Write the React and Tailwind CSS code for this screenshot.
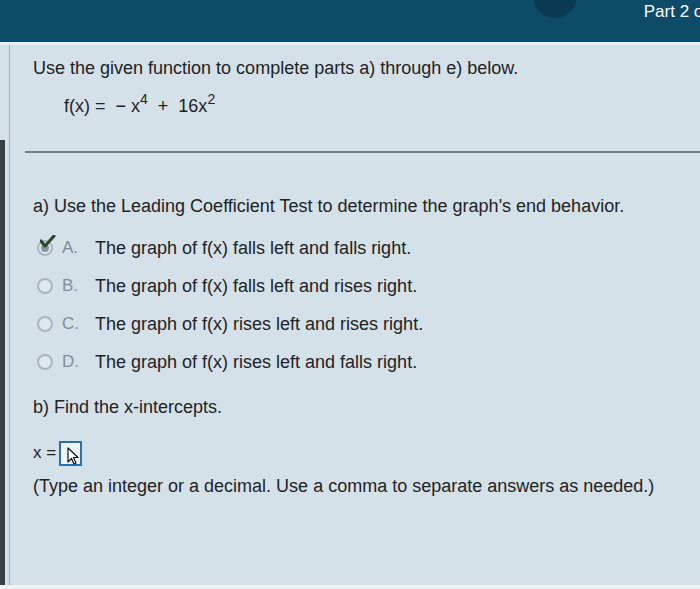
import React from "react";

const font = { fontFamily: '"Liberation Sans", Arial, sans-serif' };

function Radio({ checked }) {
  return (
    <span className="relative inline-block w-[16px] h-[16px]">
      <span className="absolute inset-0 rounded-full border-[2px] border-[#a9b6be] bg-[#dfe8ed]" />
      {checked && (
        <>
          <span className="absolute left-[4px] top-[4px] w-[8px] h-[8px] rounded-full bg-[#8b979e]" />
          <svg className="absolute left-[3px] top-[-5px]" width="16" height="14" viewBox="0 0 16 14">
            <path d="M1 6 L5 11 L14 1" fill="none" stroke="#2f4a2a" strokeWidth="3.2" strokeLinecap="round" strokeLinejoin="round" />
          </svg>
        </>
      )}
    </span>
  );
}

function Option({ letter, text, checked }) {
  return (
    <div className="flex items-center h-[38px]">
      <div className="w-[24px] flex justify-center">
        <Radio checked={checked} />
      </div>
      <span className="text-[17px] text-[#7f8e99] w-[38px] pl-[5px]">{letter}.</span>
      <span className="text-[18px] text-[#1e2326]">{text}</span>
    </div>
  );
}

export default function App() {
  return (
    <div className="w-[700px] h-[589px] overflow-hidden flex flex-col bg-[#d4e1e8]" style={font}>
      <div className="relative h-[42px] shrink-0 bg-[#0e4b68] flex items-start justify-end">
        <div className="absolute left-[533px] top-[-26px] w-[44px] h-[44px] rounded-full bg-[#093a52]" />
        <span className="text-white text-[17px] mt-[-1px] mr-[-8px] whitespace-nowrap">Part 2 of</span>
      </div>
      <div className="h-[3px] bg-[#e7eef2] shrink-0" />
      <div className="flex flex-1 min-h-0">
        <div className="w-[9px] shrink-0 flex flex-col">
          <div className="h-[95px] bg-[#d4e1e8]" />
          <div className="flex-1 flex">
            <div className="w-[5px] bg-[#3b4044]" />
            <div className="w-[4px] bg-[#d4e1e8]" />
          </div>
        </div>
        <div className="w-[1px] bg-[#9fb0ba] shrink-0" />
        <div className="flex-1 flex flex-col">
          <div className="pl-[23px] pt-[12px] text-[#1e2326]">
            <p className="text-[18px] leading-[22px]">Use the given function to complete parts a) through e) below.</p>
            <p className="text-[18px] leading-[22px] mt-[16px] pl-[31px] whitespace-pre">
              {"f(x) =  − x"}<sup className="text-[14px] relative top-[-0.6em]">4</sup>{"  +  16x"}<sup className="text-[14px] relative top-[-0.6em]">2</sup>
            </p>
          </div>
          <div className="h-[2px] bg-[#6f7f89] ml-[15px] mt-[34px]" />
          <div className="pl-[23px] pt-[42px] text-[#1e2326]">
            <p className="text-[18px] leading-[22px]">a) Use the Leading Coefficient Test to determine the graph's end behavior.</p>
            <div className="mt-[12px]">
              <Option letter="A" text="The graph of f(x) falls left and falls right." checked />
              <Option letter="B" text="The graph of f(x) falls left and rises right." />
              <Option letter="C" text="The graph of f(x) rises left and rises right." />
              <Option letter="D" text="The graph of f(x) rises left and falls right." />
            </div>
            <p className="text-[18px] leading-[22px] mt-[15px]">b) Find the x-intercepts.</p>
            <div className="flex items-center mt-[22px] h-[26px]">
              <span className="text-[17px]">x =</span>
              <span className="relative ml-[3px] w-[23px] h-[25px] border-[2px] border-[#2a6fb0] bg-[#eef4f8]">
                <svg className="absolute left-[6px] top-[4px]" width="14" height="20" viewBox="0 0 14 20">
                  <path d="M1 1 L1 15 L4.5 11.5 L7 17 L9 16 L6.5 10.5 L11 10.5 Z" fill="#fff" stroke="#111" strokeWidth="1.2" strokeLinejoin="round" />
                </svg>
              </span>
            </div>
            <p className="text-[18px] leading-[22px] mt-[9px]">(Type an integer or a decimal. Use a comma to separate answers as needed.)</p>
          </div>
        </div>
      </div>
      <div className="h-[4px] bg-[#eef3f6] shrink-0" />
    </div>
  );
}
